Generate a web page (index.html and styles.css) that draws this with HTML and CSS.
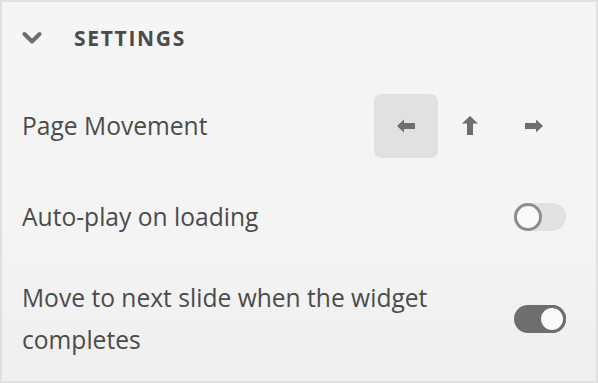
FILE: index.html
```html
<!DOCTYPE html>
<html>
<head>
<meta charset="utf-8">
<link rel="stylesheet" href="styles.css">
</head>
<body>
<div class="panel">
  <div class="header">
    <svg class="chevron" width="20" height="14" viewBox="0 0 20 14"><polyline points="2.5,3 10,10.5 17.5,3" fill="none" stroke="#6e6e6e" stroke-width="4" stroke-linecap="round" stroke-linejoin="round"/></svg>
    <span class="title">SETTINGS</span>
  </div>
  <div class="row row-movement">
    <span class="label">Page Movement</span>
    <div class="arrows">
      <button class="arrow selected"><svg width="18" height="14" viewBox="0 0 18 14"><path d="M0 7 L7 0.5 L7 4 L18 4 L18 10 L7 10 L7 13.5 Z" fill="#6e6e6e"/></svg></button>
      <button class="arrow"><svg width="16" height="19" viewBox="0 0 16 19"><path d="M8 0 L16 7.5 L11 7.5 L11 19 L5 19 L5 7.5 L0 7.5 Z" fill="#6e6e6e"/></svg></button>
      <button class="arrow"><svg width="18" height="14" viewBox="0 0 18 14"><path d="M18 7 L11 0.5 L11 4 L0 4 L0 10 L11 10 L11 13.5 Z" fill="#6e6e6e"/></svg></button>
    </div>
  </div>
  <div class="row row-autoplay">
    <span class="label">Auto-play on loading</span>
    <span class="toggle"><span class="knob"></span></span>
  </div>
  <div class="row row-next">
    <span class="label wrap">Move to next slide when the widget completes</span>
    <span class="toggle on"><span class="knob"></span></span>
  </div>
</div>
</body>
</html>
```
FILE: styles.css
```css
html, body {
  margin: 0;
  padding: 0;
}
body {
  width: 598px;
  height: 383px;
  font-family: "Open Sans", "Liberation Sans", sans-serif;
  color: #4b4b4b;
}
.panel {
  box-sizing: border-box;
  width: 598px;
  height: 383px;
  border: 2px solid #e0e0e0;
  background: linear-gradient(#f5f5f5, #f4f4f4 60%, #efefef);
  padding: 0 30px 0 20px;
  display: flex;
  flex-direction: column;
}
.header {
  height: 72px;
  display: flex;
  align-items: center;
}
.chevron {
  display: block;
}
.title {
  margin-left: 32px;
  font-size: 21px;
  font-weight: 700;
  letter-spacing: 1.7px;
  color: #4b4b4b;
}
.row {
  display: flex;
  align-items: center;
  justify-content: space-between;
}
.row-movement { height: 104px; }
.row-autoplay { height: 80px; }
.row-next { height: 124px; }
.label {
  font-size: 24.6px;
  line-height: 42px;
}
.wrap {
  width: 440px;
}
.arrows {
  display: flex;
}
.arrow {
  width: 64px;
  height: 64px;
  border: 0;
  padding: 0;
  margin: 0;
  background: transparent;
  border-radius: 7px;
  display: flex;
  align-items: center;
  justify-content: center;
}
.arrow svg { display: block; }
.arrow.selected {
  background: #e1e1e1;
}
.toggle {
  position: relative;
  width: 52px;
  height: 28px;
  border-radius: 14px;
  background: #e1e1e1;
  display: flex;
  align-items: center;
}
.knob {
  box-sizing: border-box;
  width: 28px;
  height: 28px;
  border-radius: 50%;
  background: #fafafa;
  border: 3px solid #8e8e8e;
}
.toggle.on {
  background: #6e6e6e;
  justify-content: flex-end;
}
.toggle.on .knob {
  border-color: #6e6e6e;
}
```
